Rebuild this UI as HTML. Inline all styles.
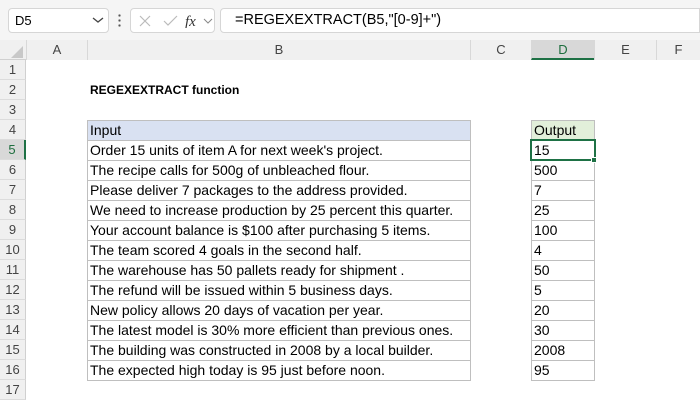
<!DOCTYPE html>
<html><head><style>
body{margin:0;width:700px;height:400px;overflow:hidden;background:#fff;font-family:"Liberation Sans",Arial,sans-serif;position:relative}
.a{position:absolute;box-sizing:border-box}
.hdr{background:#f0f0f0;color:#444;font-size:13px;text-align:center;line-height:20px}
.rn{left:0;width:26px;height:20px;line-height:20px;text-align:center;font-size:13px;color:#444;background:#f0f0f0;border-bottom:1px solid #dcdcdc;border-right:1px solid #d0d0d0}
.c{font-size:14px;line-height:19px;padding-left:2px;color:#000;white-space:nowrap}
</style></head><body>
<div class="a" style="left:0;top:0;width:700px;height:40px;background:#f5f5f5"></div>
<div class="a" style="left:8px;top:8px;width:101px;height:25px;background:#fff;border:1px solid #d6d6d6;border-radius:4px;font-size:13px;line-height:23px;padding-left:6px">D5</div>
<svg class="a" style="left:92px;top:16px" width="12" height="8"><path d="M1 2 L6 6 L11 2" stroke="#444" fill="none" stroke-width="1.3"/></svg>
<div class="a" style="left:118px;top:13px;width:3px;height:14px;background:radial-gradient(circle,#555 1px,transparent 1.3px) 0 0/3px 5px"></div>
<div class="a" style="left:130px;top:8px;width:85px;height:25px;background:#fff;border:1px solid #d6d6d6;border-radius:4px"></div>
<svg class="a" style="left:138px;top:14px" width="80" height="14"><path d="M2 2L12 12M12 2L2 12" stroke="#bbb" stroke-width="1.2"/><path d="M26 7L30 11L39 2" stroke="#bbb" stroke-width="1.2" fill="none"/><text x="47" y="12" font-family="Liberation Serif" font-style="italic" font-size="15" fill="#333">fx</text><path d="M66 5L70 9L74 5" stroke="#888" fill="none"/></svg>
<div class="a" style="left:220px;top:8px;width:480px;height:25px;background:#fff;border:1px solid #d6d6d6;border-radius:4px 0 0 4px;font-size:14.5px;line-height:23px;padding-left:14px">=REGEXEXTRACT(B5,"[0-9]+")</div>
<div class="a" style="left:0;top:40px;width:700px;height:20px;background:#f0f0f0;border-bottom:1px solid #d0d0d0"></div>
<svg class="a" style="left:10px;top:45px" width="14" height="14"><path d="M13 1L13 13L1 13Z" fill="#c8c8c8"/></svg>
<div class="a hdr" style="left:26px;top:40px;width:61px;height:20px;border-left:1px solid #d8d8d8">A</div>
<div class="a hdr" style="left:87px;top:40px;width:383px;height:20px;border-left:1px solid #d8d8d8">B</div>
<div class="a hdr" style="left:470px;top:40px;width:61px;height:20px;border-left:1px solid #d8d8d8">C</div>
<div class="a hdr" style="left:531px;top:40px;width:63px;height:20px;border-left:1px solid #d8d8d8;background:#d8d8d8;color:#1e6e3e;border-bottom:2px solid #1e7145">D</div>
<div class="a hdr" style="left:594px;top:40px;width:62px;height:20px;border-left:1px solid #d8d8d8">E</div>
<div class="a hdr" style="left:656px;top:40px;width:44px;height:20px;border-left:1px solid #d8d8d8">F</div>
<div class="a rn" style="top:60px">1</div><div class="a rn" style="top:80px">2</div><div class="a rn" style="top:100px">3</div><div class="a rn" style="top:120px">4</div>
<div class="a rn" style="top:140px;background:#d8d8d8;color:#1e6e3e;border-right:2px solid #1e7145">5</div>
<div class="a rn" style="top:160px">6</div><div class="a rn" style="top:180px">7</div><div class="a rn" style="top:200px">8</div><div class="a rn" style="top:220px">9</div><div class="a rn" style="top:240px">10</div><div class="a rn" style="top:260px">11</div><div class="a rn" style="top:280px">12</div><div class="a rn" style="top:300px">13</div><div class="a rn" style="top:320px">14</div><div class="a rn" style="top:340px">15</div><div class="a rn" style="top:360px">16</div><div class="a rn" style="top:380px">17</div>
<div class="a c" style="left:88px;top:81px;font-weight:bold;font-size:12px">REGEXEXTRACT function</div>
<div class="a" style="left:87px;top:120px;width:384px;height:261px;border:1px solid #bfbfbf;background:repeating-linear-gradient(#fff 0 19px,#bfbfbf 19px 20px)"></div>
<div class="a" style="left:88px;top:121px;width:382px;height:19px;background:#d9e1f2"></div>
<div class="a" style="left:531px;top:120px;width:64px;height:261px;border:1px solid #bfbfbf;background:repeating-linear-gradient(#fff 0 19px,#bfbfbf 19px 20px)"></div>
<div class="a" style="left:532px;top:121px;width:62px;height:19px;background:#e2efda"></div>
<div class="a" style="left:530px;top:139px;width:66px;height:22px;border:2px solid #1e7145"></div>
<div class="a" style="left:591px;top:157px;width:6px;height:6px;background:#1e7145;border:1px solid #fff"></div>
<div class="a" style="left:88px;top:121px">
<div class="c">Input</div><div class="c" style="margin-top:1px">Order 15 units of item A for next week's project.</div>
<div class="c" style="margin-top:1px">The recipe calls for 500g of unbleached flour.</div>
<div class="c" style="margin-top:1px">Please deliver 7 packages to the address provided.</div>
<div class="c" style="margin-top:1px">We need to increase production by 25 percent this quarter.</div>
<div class="c" style="margin-top:1px">Your account balance is $100 after purchasing 5 items.</div>
<div class="c" style="margin-top:1px">The team scored 4 goals in the second half.</div>
<div class="c" style="margin-top:1px">The warehouse has 50 pallets ready for shipment .</div>
<div class="c" style="margin-top:1px">The refund will be issued within 5 business days.</div>
<div class="c" style="margin-top:1px">New policy allows 20 days of vacation per year.</div>
<div class="c" style="margin-top:1px">The latest model is 30% more efficient than previous ones.</div>
<div class="c" style="margin-top:1px">The building was constructed in 2008 by a local builder.</div>
<div class="c" style="margin-top:1px">The expected high today is 95 just before noon.</div>
</div>
<div class="a" style="left:532px;top:121px">
<div class="c">Output</div><div class="c" style="margin-top:1px">15</div><div class="c" style="margin-top:1px">500</div><div class="c" style="margin-top:1px">7</div><div class="c" style="margin-top:1px">25</div><div class="c" style="margin-top:1px">100</div><div class="c" style="margin-top:1px">4</div><div class="c" style="margin-top:1px">50</div><div class="c" style="margin-top:1px">5</div><div class="c" style="margin-top:1px">20</div><div class="c" style="margin-top:1px">30</div><div class="c" style="margin-top:1px">2008</div><div class="c" style="margin-top:1px">95</div>
</div>
</body></html>
